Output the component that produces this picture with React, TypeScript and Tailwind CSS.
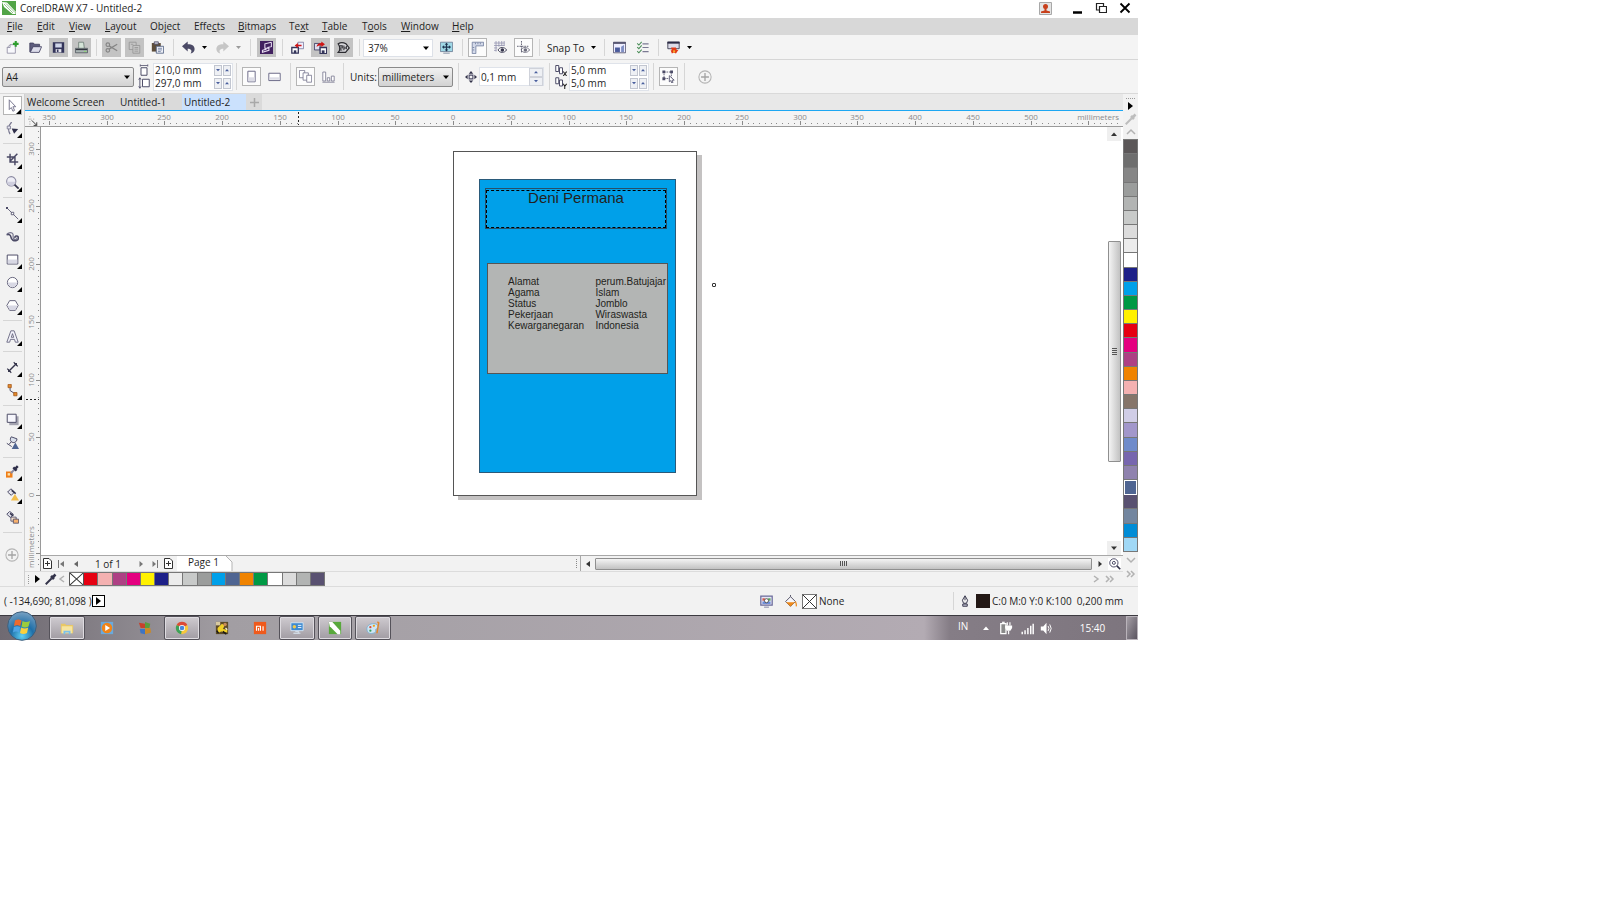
import type { ReactNode } from 'react';

/* ---------- drawing helpers ---------- */

function Icon({ size = 16, children }: { size?: number; children: ReactNode }) {
  return (
    <svg width={size} height={size} viewBox="0 0 16 16" fill="none" aria-hidden="true" className="shrink-0">
      {children}
    </svg>
  );
}

function Tri({ dir, className = 'text-black' }: { dir: 'up' | 'down' | 'left' | 'right'; className?: string }) {
  const d = {
    up: 'M0 5 L3 1.5 L6 5Z',
    down: 'M0 1.5 L3 5 L6 1.5Z',
    left: 'M5 0 L1 3 L5 6Z',
    right: 'M1.5 0 L5 3 L1.5 6Z',
  }[dir];
  return (
    <svg width="6" height="6" viewBox="0 0 6 6" fill="currentColor" aria-hidden="true" className={`shrink-0 ${className}`}>
      <path d={d} />
    </svg>
  );
}

const ink = '#4b4a66';

/* ---------- icon drawings ---------- */

const newDoc = (
  <Icon>
    <path d="M5 4.500h6.500v10.500H1.500V8z" fill="#f8f8fc" stroke="#8c8aa0" />
    <path d="M1.500 8H5V4.500" stroke="#8c8aa0" />
    <path d="M12 0v7M8.500 3.500h7" stroke="#2f9e2f" strokeWidth="2.600" />
  </Icon>
);
const openDoc = (
  <Icon>
    <path d="M1 13.500V2.500h4.500l1 1.500h6.500v3" fill="#5c5b7c" stroke="#3f3e5c" />
    <path d="M1.500 14L5 7h10.500l-3 7z" fill="#dcdcea" stroke="#3f3e5c" />
  </Icon>
);
const save = (
  <Icon>
    <path d="M1 1.500h14v13H1z" fill="#33345a" />
    <path d="M4 3h8v5H4z" fill="#cfd5e8" />
    <path d="M4.500 10h7v4h-7z" fill="#e6e6ee" />
    <path d="M6 10.500h2v3H6z" fill="#33345a" />
  </Icon>
);
const print = (
  <Icon>
    <path d="M4.500 9V1.500h6L11.500 9" fill="#d5e4d8" stroke="#6d7c75" />
    <path d="M.5 9h15v5.500H.5z" fill="#a9b4b4" stroke="#50565e" />
    <path d="M1 10.500h14" stroke="#33363f" strokeWidth="1.500" />
    <path d="M11 12.800h3" stroke="#8ae06a" />
  </Icon>
);
const cut = (
  <Icon>
    <g stroke="#858585" strokeWidth="1.500">
      <path d="M5 6L15 12M5 10L15 4" />
      <circle cx="3.500" cy="4.500" r="2.200" />
      <circle cx="3.500" cy="11.500" r="2.200" />
    </g>
  </Icon>
);
const copy = (
  <Icon>
    <g stroke="#949494" fill="#c6c6c6">
      <path d="M1.500 1.500h8.500v9H1.500z" />
      <path d="M6 5.500h8.500v9.500H6z" />
      <path d="M8 8h4.500M8 10h4.500M8 12.500h4.500M3.500 4h3" />
    </g>
  </Icon>
);
const paste = (
  <Icon>
    <path d="M1 2.500h11V13H1z" fill="#5c4c3a" />
    <path d="M4 1h5v3H4z" fill="#c9c9d4" stroke="#4b4a66" />
    <path d="M6.500 6.500h9v8.500h-9z" fill="#eef0f8" stroke="#4b5b7c" />
    <path d="M8.500 9h5M8.500 11h5M8.500 13h3.500" stroke="#6b7b9c" />
  </Icon>
);
const undo = (
  <Icon>
    <path d="M0 6.500L7 .5V4c6 0 8.500 2.500 8.500 6 0 2.500-2 4.500-5 5.500 2-3 1.500-6-3.500-6V13z" fill="#4b4a66" />
  </Icon>
);
const redo = (
  <Icon>
    <path d="M16 6.500L9 .5V4C3 4 .5 6.500.5 10c0 2.500 2 4.500 5 5.500-2-3-1.500-6 3.500-6V13z" fill="#c6c6c6" />
  </Icon>
);
const launcher = (
  <Icon>
    <path d="M0 0h16v16H0z" fill="#41205f" />
    <path d="M14 1.500L6 3.500V9h5v2.500L3 14v-2.500L8 10M14 1.500V7L9 8" stroke="#e8def2" strokeWidth="1.300" />
  </Icon>
);
const importIcon = (
  <Icon>
    <path d="M8.500 1.500h7v8h-7z" fill="#eef" stroke="#77779a" />
    <path d="M1 8h8v7H1z" fill="#fff" stroke="#33345a" strokeWidth="1.600" />
    <path d="M3.500 11.500h3V15h-3z" fill="#33345a" />
    <path d="M13 4.500H8.500v-2L4.500 5.500l4 3V6.500H13z" fill="#cf1616" />
  </Icon>
);
const exportIcon = (
  <Icon>
    <path d="M.5 3h7v8h-7z" fill="#dde" stroke="#33345a" />
    <path d="M7.500 8h8v7.500h-8z" fill="#fff" stroke="#33345a" strokeWidth="1.600" />
    <path d="M9.500 11.500h3.500V15H9.500z" fill="#33345a" />
    <path d="M3 7c1-3.500 3-4.500 6-4.500V.5L13.500 4 9 7.500v-2C6 5.500 5 6 3 7z" fill="#cf1616" />
  </Icon>
);
const publish = (
  <Icon>
    <path d="M1.500 3.500c3-2 6-2 9.500 0L15 8.500l-4.500 5.500h-9c2.500-2.500 2.500-7 0-10.500z" fill="#d8d8dc" stroke="#2b2b30" strokeWidth="1.500" />
    <path d="M3.500 6h3v2.500h-3V11h3M8.500 5.500v6M8.500 8.500h3M11.500 6v4" stroke="#2b2b30" strokeWidth="1.300" />
  </Icon>
);
const fullScreen = (
  <Icon>
    <path d="M.5 1.500h15v11.500H.5z" fill="#9fd8e6" stroke="#6a7a92" />
    <path d="M4 15h8" stroke="#9aa4b4" strokeWidth="1.500" />
    <path d="M8 3v8.500M3.500 7.500h9" stroke="#1f3550" strokeWidth="1.500" />
    <path d="M8 2L5.800 4.500h4.400zM8 13l-2.200-2.500h4.400zM2.500 7.500L5 5.300v4.400zM13.500 7.500L11 5.300v4.400z" fill="#1f3550" />
  </Icon>
);
const rulers = (
  <Icon>
    <path d="M1.500 1.500h14v4.500h-9.500v9.500h-4.500z" fill="#d4daea" stroke="#6f7c9c" />
    <path d="M5.500 2v2M8.500 2v2M11.500 2v2M2 8h2M2 11h2" stroke="#6f7c9c" />
  </Icon>
);
const eye = (
  <g>
    <path d="M5 11c2-4 8-4 10.500 0-2.500 4-8.500 4-10.500 0z" fill="#fff" stroke="#44445a" strokeWidth="1.200" />
    <circle cx="10.300" cy="11" r="2.200" fill="#33334a" />
  </g>
);
const grid = (
  <Icon>
    <path d="M0 2.500h13M0 5.500h13M0 8.500h4M0 11.500h3M2.500 0v13M6 0v7M9.500 0v6M12.500 0v6" stroke="#9494b0" />
    {eye}
  </Icon>
);
const guides = (
  <Icon>
    <path d="M0 6.500h15M5.500 0v14" stroke="#44445a" strokeDasharray="2 1" />
    <g opacity="0.700">{eye}</g>
  </Icon>
);
const optionsIcon = (
  <Icon>
    <path d="M.5 1.500h15v13H.5z" fill="#eef" stroke="#4b4a66" />
    <path d="M.5 2.500h15" stroke="#4b4a66" strokeWidth="2" />
    <path d="M2.500 8h6v5.500h-6z" fill="#4b5b9c" />
    <path d="M10 13.500V7l3.500-2v8.500z" fill="#7f8fc4" />
  </Icon>
);
const checklist = (
  <Icon>
    <path d="M8 3.500h7.500M8 8h7.500M8 13h7.500" stroke="#7b7a93" strokeWidth="1.500" />
    <path d="M1.500 3l2 2L7 1M1.500 7.500l2 2L7 5.500M1.500 12.500l2 2L7 10.500" stroke="#4d8f5a" strokeWidth="1.300" />
  </Icon>
);
const appLauncher = (
  <Icon>
    <path d="M1 1.500h14v8H1z" fill="#dcdce8" stroke="#2b2b44" />
    <path d="M.5 2h15" stroke="#2b2b44" strokeWidth="2.500" />
    <path d="M5 8h6l1 3h2L11 15.500 8.500 14 6 15.500 4.500 11.500H6z" fill="#e23a17" />
    <path d="M7.500 11.500H10V14H7.500z" fill="#f6b02c" />
  </Icon>
);
const nudge = (
  <Icon size={12}>
    <path d="M5.500 5.500h5v5h-5z" stroke={ink} strokeWidth="1.500" />
    <path d="M8 0l3 3.500H5zM8 16l3-3.500H5zM0 8l3.500-3v6zM16 8l-3.500-3v6z" fill="#33334a" />
  </Icon>
);
const allPages = (
  <Icon>
    <g fill="#fff" stroke="#77768f">
      <path d="M.5.500h6.500v9H.5z" />
      <path d="M5 3.500h6.500v9H5z" />
      <path d="M9.500 6.500h6v8.500h-6z" />
    </g>
  </Icon>
);
const currentPage = (
  <Icon>
    <g fill="#fff" stroke="#77768f">
      <path d="M1 2.500h3.500v11H1z" />
      <path d="M6.500 9.500h3v4h-3z" />
      <path d="M11.500 7.500H15v6h-3.500z" />
      <path d="M.5 15h15" />
    </g>
  </Icon>
);
const treatAsFilled = (
  <Icon>
    <path d="M2.500 2.500h9v8h-9z" stroke={ink} strokeDasharray="2 1" />
    <path d="M.5.500h3.500V4H.5zM10 .500h3.500V4H10zM.5 9h3.500v3.500H.5z" fill={ink} />
    <path d="M9 7l6 5.500h-2.500l1 3-1.500.5-1-3L9 14.500z" fill="#fff" stroke={ink} />
  </Icon>
);
const plusCircle = (
  <Icon size={14}>
    <circle cx="8" cy="8" r="7" stroke="#b4b4b4" strokeWidth="1.200" />
    <path d="M8 3.500v9M3.500 8h9" stroke="#a4a4a4" strokeWidth="1.500" />
  </Icon>
);

/* ---------- small controls ---------- */

function Slot({ label, framed, dim, children }: { label: string; framed?: boolean; dim?: boolean; children: ReactNode }) {
  const look = dim ? 'bg-[#c3c3c3]' : framed ? 'border border-[#b5b5b5] bg-[#fcfcfc]' : '';
  return (
    <span className="flex w-[23px] shrink-0 justify-center">
      <button type="button" aria-label={label} className={`flex size-[19px] items-center justify-center ${look}`}>
        <span className="flex size-[13px] items-center justify-center [&>svg]:max-h-full [&>svg]:max-w-full">{children}</span>
      </button>
    </span>
  );
}

function Sep({ className = 'w-2' }: { className?: string }) {
  return (
    <span className={`flex h-full shrink-0 items-center justify-center ${className}`}>
      <span className="h-[calc(100%-6px)] w-px bg-[#d6d6d6]" />
    </span>
  );
}

function Caret({ label, className = 'text-black' }: { label: string; className?: string }) {
  return (
    <button type="button" aria-label={label} className="mr-0.5 flex w-[9px] shrink-0 items-center justify-center">
      <svg width="5" height="3" viewBox="0 0 5 3" fill="currentColor" className={className}>
        <path d="M0 0h5L2.500 3z" />
      </svg>
    </button>
  );
}

function SpinField({ id, label, value }: { id: string; label: string; value: string }) {
  return (
    <span className="flex h-[13px] w-full items-center bg-white pr-px">
      <input id={id} aria-label={label} defaultValue={value} className="h-4 w-0 flex-1 bg-transparent pl-px leading-4 outline-none" />
      <span className="flex gap-px">
        <button type="button" aria-label={`Decrease ${label}`} className="flex h-[11px] w-2 items-center justify-center border border-[#c2c6d0] bg-[#eef0f4]">
          <Tri dir="down" className="w-1 text-[#4a5f9e]" />
        </button>
        <button type="button" aria-label={`Increase ${label}`} className="flex h-[11px] w-2 items-center justify-center border border-[#c2c6d0] bg-[#eef0f4]">
          <Tri dir="up" className="w-1 text-[#4a5f9e]" />
        </button>
      </span>
    </span>
  );
}

function DropDown({ id, label, value, className }: { id: string; label: string; value: string; className: string }) {
  return (
    <span className={`relative flex h-5 shrink-0 items-center ${className}`}>
      <select
        id={id}
        aria-label={label}
        className="h-full w-full appearance-none rounded-[2px] border border-[#8a8a8a] bg-linear-to-b from-[#f1f1f1] to-[#d2d2d2] pl-[3px] outline-none"
      >
        <option>{value}</option>
      </select>
      <span className="pointer-events-none absolute right-1">
        <Tri dir="down" />
      </span>
    </span>
  );
}

/* ---------- bars ---------- */

function TitleBar() {
  return (
    <header className="flex h-[18px] items-center justify-between bg-white pr-[7px] pb-0.5 pl-0.5">
      <div className="flex items-center gap-1">
        <svg width="14" height="14" viewBox="0 0 14 14" aria-hidden="true">
          <path d="M0 0h14v14H0z" fill="#52a447" />
          <path d="M0 1l5 .5L13.500 10.500V13H10.500L2 6z" fill="#fff" />
          <path d="M2 3l9 9M4 2.500l9 9" stroke="#52a447" strokeWidth="0.600" />
        </svg>
        <h1 className="text-[10px] leading-4">CorelDRAW X7 - Untitled-2</h1>
      </div>
      <div className="flex items-center">
        <button type="button" aria-label="Account" className="mr-5">
          <svg width="13" height="13" viewBox="0 0 13 13">
            <path d="M.5.5h12v12H.5z" fill="#e4e4e4" stroke="#a8a8a8" />
            <circle cx="6.500" cy="4.500" r="2.500" fill="#c8401c" />
            <path d="M5.500 6h2v2.500l3.500 1V11H2V9.500l3.500-1z" fill="#c8401c" />
          </svg>
        </button>
        <button type="button" aria-label="Minimize" className="mr-3">
          <svg width="11" height="12" viewBox="0 0 11 12"><path d="M1 10.500h9" stroke="#000" strokeWidth="2.500" /></svg>
        </button>
        <button type="button" aria-label="Restore" className="mr-3">
          <svg width="12" height="12" viewBox="0 0 12 12" fill="none" stroke="#222">
            <path d="M4.500 8H1.500V1.500h7v3" strokeWidth="1.200" />
            <path d="M4.500 4.500h7v6h-7z" fill="#fff" strokeWidth="1.200" />
          </svg>
        </button>
        <button type="button" aria-label="Close">
          <svg width="12" height="12" viewBox="0 0 12 12" stroke="#000" strokeWidth="1.800"><path d="M1.500 1.500l9 9M10.500 1.500l-9 9" /></svg>
        </button>
      </div>
    </header>
  );
}

const menus: [string, string, string, string][] = [
  ['', 'F', 'ile', 'w-[30px]'],
  ['', 'E', 'dit', 'w-8'],
  ['', 'V', 'iew', 'w-9'],
  ['', 'L', 'ayout', 'w-[45px]'],
  ['Ob', 'j', 'ect', 'w-11'],
  ['Effe', 'c', 'ts', 'w-11'],
  ['', 'B', 'itmaps', 'w-[51px]'],
  ['Te', 'x', 't', 'w-[33px]'],
  ['', 'T', 'able', 'w-10'],
  ['T', 'o', 'ols', 'w-[39px]'],
  ['', 'W', 'indow', 'w-[51px]'],
  ['', 'H', 'elp', 'w-[35px]'],
];

function MenuBar() {
  return (
    <nav aria-label="Menu" className="flex h-[17px] items-start bg-[#d8d8d8] pt-px pl-[7px]">
      {menus.map(([before, key, after, width]) => (
        <button key={before + key + after} type="button" className={`shrink-0 text-left whitespace-nowrap ${width}`}>
          {before}
          <span className="underline">{key}</span>
          {after}
        </button>
      ))}
    </nav>
  );
}

function StandardBar() {
  return (
    <div role="toolbar" aria-label="Standard" className="flex h-[25px] items-center border-b border-[#d6d6d6] pt-px pl-px">
      <Slot label="New">{newDoc}</Slot>
      <Slot label="Open">{openDoc}</Slot>
      <Slot label="Save" dim>{save}</Slot>
      <Slot label="Print" dim>{print}</Slot>
      <Sep className="w-[7px]" />
      <Slot label="Cut" dim>{cut}</Slot>
      <Slot label="Copy" dim>{copy}</Slot>
      <Slot label="Paste">{paste}</Slot>
      <Sep />
      <Slot label="Undo">{undo}</Slot>
      <Caret label="Undo list" />
      <Slot label="Redo">{redo}</Slot>
      <Caret label="Redo list" className="text-[#9a9a9a]" />
      <Sep className="w-2.5" />
      <Slot label="Search content" dim>{launcher}</Slot>
      <Sep />
      <Slot label="Import">{importIcon}</Slot>
      <Slot label="Export" dim>{exportIcon}</Slot>
      <Slot label="Publish to PDF" dim>{publish}</Slot>
      <Sep />
      <span className="relative flex h-[18px] w-[70px] shrink-0 items-center">
        <select aria-label="Zoom level" className="h-full w-full appearance-none border border-[#dde1e8] bg-white pl-1 outline-none">
          <option>37%</option>
        </select>
        <span className="pointer-events-none absolute right-1"><Tri dir="down" /></span>
      </span>
      <span className="w-0.5 shrink-0" />
      <Slot label="Full-screen preview">{fullScreen}</Slot>
      <Sep />
      <Slot label="Show rulers" framed>{rulers}</Slot>
      <Slot label="Show grid">{grid}</Slot>
      <Slot label="Show guidelines" framed>{guides}</Slot>
      <Sep />
      <button type="button" className="w-[46px] shrink-0 pl-1 text-left whitespace-nowrap">Snap To</button>
      <Caret label="Snap options" />
      <Sep />
      <Slot label="Welcome options">{optionsIcon}</Slot>
      <Slot label="Options">{checklist}</Slot>
      <Sep />
      <Slot label="Application launcher">{appLauncher}</Slot>
      <Caret label="Applications" />
    </div>
  );
}

function PropertyBar() {
  return (
    <div role="toolbar" aria-label="Property bar" className="flex h-[34px] items-center border-b border-[#d9d9d9] pl-0.5">
      <DropDown id="paper" label="Page size" value="A4" className="w-[132px]" />
      <span className="flex w-[19px] shrink-0 flex-col items-center gap-px">
        <Icon size={12}>
          <path d="M4 5h8v10H4z" fill="#fff" stroke={ink} strokeWidth="1.300" />
          <path d="M3 2h10M3 .5v3M13 .5v3" stroke={ink} />
        </Icon>
        <Icon size={12}>
          <path d="M6 3h9v10H6z" fill="#fff" stroke={ink} strokeWidth="1.300" />
          <path d="M2.500 2v12M1 3.500L2.500 1 4 3.500M1 12.500L2.500 15 4 12.500" stroke={ink} strokeWidth="1.200" />
        </Icon>
      </span>
      <span className="flex w-20 shrink-0 flex-col border border-[#dfe3ea]">
        <SpinField id="page-width" label="Page width" value="210,0 mm" />
        <SpinField id="page-height" label="Page height" value="297,0 mm" />
      </span>
      <Sep className="w-[7px]" />
      <Slot label="Portrait" framed>
        <Icon><path d="M3.500 1.500h9v13h-9z" fill="#fff" stroke="#6b6a88" strokeWidth="1.200" /><path d="M4 9h8v5H4z" fill="#dcdce6" /></Icon>
      </Slot>
      <Slot label="Landscape">
        <Icon><path d="M1 4h14v9H1z" fill="#fff" stroke="#6b6a88" strokeWidth="1.200" /><path d="M2 9h12v3H2z" fill="#dcdce6" /></Icon>
      </Slot>
      <Sep />
      <Slot label="All pages" framed>{allPages}</Slot>
      <Slot label="Current page">{currentPage}</Slot>
      <Sep className="w-[7px]" />
      <label htmlFor="units" className="w-[31px] shrink-0 pl-[3px] whitespace-nowrap">Units:</label>
      <DropDown id="units" label="Units" value="millimeters" className="w-[75px]" />
      <Sep className="w-2.5" />
      <span className="flex w-4 shrink-0 justify-center">{nudge}</span>
      <span className="flex h-[19px] w-[65px] shrink-0 items-center border border-[#dfe3ea] bg-white">
        <input id="nudge" aria-label="Nudge distance" defaultValue="0,1 mm" className="h-4 w-0 flex-1 bg-transparent pl-px leading-4 outline-none" />
        <span className="flex flex-col">
          <button type="button" aria-label="Increase nudge" className="flex h-[9px] w-3.5 items-center justify-center border border-[#cfd2da] bg-[#eef0f4]"><Tri dir="up" className="w-1 text-[#4a5f9e]" /></button>
          <button type="button" aria-label="Decrease nudge" className="flex h-[9px] w-3.5 items-center justify-center border border-[#cfd2da] bg-[#eef0f4]"><Tri dir="down" className="w-1 text-[#4a5f9e]" /></button>
        </span>
      </span>
      <Sep className="w-2.5" />
      <span className="flex w-[14px] shrink-0 flex-col items-center gap-px">
        <Icon size={12}>
          <path d="M1 2h4v8H1zM6 5h4v8H6z" fill="#fff" stroke={ink} strokeWidth="1.300" />
          <path d="M11 10l4.500 6M15.500 10L11 16" stroke="#222" strokeWidth="1.400" />
        </Icon>
        <Icon size={12}>
          <path d="M1 1h4v8H1zM6 4h4v8H6z" fill="#fff" stroke={ink} strokeWidth="1.300" />
          <path d="M11 9l2 3.500L15.500 9M13 12v4" stroke="#222" strokeWidth="1.400" />
        </Icon>
      </span>
      <span className="ml-px flex w-20 shrink-0 flex-col border border-[#dfe3ea]">
        <SpinField id="dup-x" label="Duplicate x" value="5,0 mm" />
        <SpinField id="dup-y" label="Duplicate y" value="5,0 mm" />
      </span>
      <Sep />
      <Slot label="Treat as filled" framed>{treatAsFilled}</Slot>
      <Sep />
      <button type="button" aria-label="Customize" className="ml-2.5">{plusCircle}</button>
    </div>
  );
}

/* ---------- toolbox ---------- */

type Tool = { label: string; fly?: boolean; framed?: boolean; art: ReactNode };

const toolGroups: { roomy: boolean; tools: Tool[] }[] = [
  {
    roomy: true,
    tools: [
      { label: 'Pick', fly: true, framed: true, art: <path d="M4 1l8 8.500H8.500l2 4.500-2 1-2-4.500L4 13z" fill="#fff" stroke="#77768f" strokeWidth="1.200" /> },
      { label: 'Shape', fly: true, art: <g><path d="M7 0C3 4 2 10 5 15" stroke="#77768f" strokeWidth="1.500" /><path d="M1.500 5h4v3.500h-4z" fill="#e4e4ee" stroke="#77768f" /><path d="M7 8l8 .5-5 6z" fill="#2f2f4a" /></g> },
    ],
  },
  {
    roomy: true,
    tools: [
      { label: 'Crop', fly: true, art: <path d="M5 1v10h10M1 5h10v10M14 1L5 10" stroke={ink} strokeWidth="1.800" /> },
      { label: 'Zoom', fly: true, art: <g><circle cx="6.500" cy="6.500" r="5.700" fill="#eeeef6" stroke="#8988a0" strokeWidth="1.300" /><path d="M1.500 7a5 5 0 0010 0z" fill="#cfcfdf" /><path d="M10.500 10.500L15.500 15.500" stroke="#33334a" strokeWidth="2.200" /></g> },
    ],
  },
  {
    roomy: true,
    tools: [
      { label: 'Freehand', fly: true, art: <g><path d="M1 1l14 14" stroke={ink} /><path d="M6.500 6.500h3v3h-3z" fill="#fff" stroke={ink} /><path d="M0 0h2.500v2.500H0z" fill={ink} /></g> },
      { label: 'Artistic media', art: <g><path d="M1 6.500c0-3 6-4.500 7.500-1.500 1 2-1 5 1.500 6.500 2 1 4-.5 3.500-2.500" stroke="#77768f" strokeWidth="1.500" /><path d="M1.500 6c2.500-1 4 0 4.500 2.500.5 4 4 5.500 7 4.500s3-5 .5-5.500-3 1.500-2 2.500" stroke={ink} strokeWidth="1.900" /></g> },
      { label: 'Rectangle', fly: true, art: <g><path d="M1.500 2.500h13v11h-13z" fill="#fff" stroke={ink} strokeWidth="1.200" /><path d="M2 8h12v5H2z" fill="#d8d8e4" /></g> },
      { label: 'Ellipse', fly: true, art: <g><circle cx="8" cy="8" r="6.300" fill="#fff" stroke={ink} /><path d="M2.200 8a5.800 5.800 0 0011.600 0z" fill="#d8d8e4" /></g> },
      { label: 'Polygon', fly: true, art: <g><path d="M4.500 2h7L15 8l-3.500 6h-7L1 8z" fill="#fff" stroke={ink} /><path d="M1.700 8h12.600l-3 5.500H4.700z" fill="#d8d8e4" /></g> },
    ],
  },
  {
    roomy: true,
    tools: [
      { label: 'Text', fly: true, art: <path d="M6 1h4l5 14h-3.500l-1-3.500h-5l-1 3.500H1zM8 4.500L6.500 9h3z" fill="#f2f2fa" stroke="#66657f" strokeWidth="1.100" /> },
    ],
  },
  {
    roomy: false,
    tools: [
      { label: 'Dimension', fly: true, art: <g><path d="M4 12l8-8" stroke="#33334a" strokeWidth="1.800" /><path d="M1.500 9.500l5 5M9.500 1.500l5 5" stroke="#33334a" strokeWidth="1.300" /><path d="M2.500 13.500v-4l4 4zM13.500 2.500v4l-4-4z" fill="#33334a" /></g> },
      { label: 'Connector', fly: true, art: <g><path d="M5 4v4l6 4" stroke={ink} strokeWidth="1.200" /><path d="M2.500.5h4v4h-4zM9.500 10.500h4v4h-4z" fill="#e58a2a" stroke="#a35a20" /></g> },
    ],
  },
  {
    roomy: false,
    tools: [
      { label: 'Drop shadow', fly: true, art: <g><path d="M4 4h11.500v11H4z" fill="#a4a4b0" /><path d="M1.500 1.500h11v10h-11z" fill="#f6f6fc" stroke={ink} strokeWidth="1.200" /></g> },
      { label: 'Transparency', art: <g><path d="M6.500 1l7 2.500c0 4-4 6-7 3.500C5 5.500 5 3 6.500 1z" fill="#d9e0ec" stroke={ink} strokeWidth="1.200" /><path d="M6.500 7L4 10M1 9l6 4" stroke={ink} strokeWidth="1.200" /><path d="M11.500 8l4.500 8H7z" fill="#4f6592" /></g> },
    ],
  },
  {
    roomy: false,
    tools: [
      { label: 'Color eyedropper', fly: true, art: <g><path d="M0 8h8v7.500H0z" fill="#ef7d17" /><path d="M2 10h3v3H2z" fill="#fde0a8" /><path d="M6 10l6-6" stroke="#8a8aa4" strokeWidth="2.500" /><path d="M9 3l4 4M11 5l3.500-3.500" stroke="#2f2f4a" strokeWidth="3" /></g> },
      { label: 'Interactive fill', fly: true, art: <g><path d="M2 5l4-4 4.500 4-4 4z" fill="#e4e4ee" stroke={ink} strokeWidth="1.200" /><path d="M7 3l5 4" stroke="#2f2f4a" strokeWidth="1.800" /><path d="M11 7.500l5 8H6z" fill="#f2bd4b" /></g> },
      { label: 'Smart fill', art: <g><path d="M1 4l3.500-3.500L9 4 5.500 8z" fill="#e4e4ee" stroke={ink} strokeWidth="1.200" /><path d="M5 3l4 3" stroke="#2f2f4a" strokeWidth="1.800" /><path d="M6 7.500h6.500v5H6z" fill="#f6e2cc" stroke={ink} /><path d="M9 10h6.500v5H9z" fill="#f6b06c" stroke={ink} /></g> },
    ],
  },
];

function Toolbox() {
  return (
    <aside aria-label="Toolbox" className="flex w-[25px] shrink-0 flex-col items-center border-r border-[#d0d0d0] bg-[#f2f2f2]">
      {toolGroups.map((group) => (
        <div key={group.tools[0].label} className="flex w-full flex-col items-center">
          {group.tools.map((tool) => (
            <span key={tool.label} className="flex h-[23px] items-center">
              <button
                type="button"
                aria-label={tool.label}
                className={`relative flex size-[19px] items-center justify-center ${tool.framed ? 'border border-[#b5b5b5] bg-white' : ''}`}
              >
                <Icon size={13}>{tool.art}</Icon>
                {tool.fly && (
                  <svg width="5" height="5" viewBox="0 0 5 5" className="absolute right-0 bottom-0" aria-hidden="true">
                    <path d="M5 0v5H0z" />
                  </svg>
                )}
              </button>
            </span>
          ))}
          <span className={`mt-[3px] h-px w-[19px] bg-[#d6d6d6] ${group.roomy ? 'mb-1' : 'mb-0.5'}`} />
        </div>
      ))}
      <button type="button" aria-label="Add tools" className="mt-[13px]">{plusCircle}</button>
    </aside>
  );
}

/* ---------- document tabs and rulers ---------- */

function DocumentTabs() {
  return (
    <div role="tablist" className="flex h-[17px] items-stretch border-b border-[#1ea7f2] bg-[#e8e8e8]">
      <button role="tab" type="button" className="w-[93px] bg-[#dadada] pl-0.5 text-left">Welcome Screen</button>
      <button role="tab" type="button" className="w-16 bg-[#dadada] pl-0.5 text-left">Untitled-1</button>
      <button role="tab" type="button" aria-selected="true" className="w-16 bg-[#cbe1fd] pl-0.5 text-left">Untitled-2</button>
      <button type="button" aria-label="New document" className="flex w-4 items-center justify-center bg-[#dadada]">
        <svg width="9" height="9" viewBox="0 0 9 9" stroke="#a8a8a8" strokeWidth="1.500"><path d="M4.500 0v9M0 4.500h9" /></svg>
      </button>
    </div>
  );
}

const UNIT = 57.75;

function HorizontalRuler() {
  const zero = 412;
  return (
    <svg className="block h-[15px] min-w-0 flex-1" aria-hidden="true">
      {Array.from({ length: 188 }, (_, i) => i - 71).map((i) => (
        <rect key={i} x={Math.round(zero + (i * UNIT) / 10)} y="12" width="1" height="1" fill="#8a8a8a" />
      ))}
      {Array.from({ length: 19 }, (_, i) => i - 7).map((i) => (
        <g key={i}>
          <rect x={Math.round(zero + i * UNIT)} y="10" width="1" height="4" fill="#8a8a8a" />
          {i < 11 && (
            <text x={Math.round(zero + i * UNIT)} y="9" textAnchor="middle" fontSize="8" fill="#8a8a8a">
              {Math.abs(i * 50)}
            </text>
          )}
        </g>
      ))}
      <path d="M257.500 1v13" stroke="#222" strokeDasharray="2 2" />
    </svg>
  );
}

function VerticalRuler() {
  const zero = 368;
  return (
    <svg className="block w-4 shrink-0 self-stretch border-r border-[#9a9a9a]" aria-hidden="true">
      {Array.from({ length: 76 }, (_, i) => i - 12).map((i) => (
        <rect key={i} x="13" y={Math.round(zero - (i * UNIT) / 10)} width="1" height="1" fill="#8a8a8a" />
      ))}
      {Array.from({ length: 8 }, (_, i) => i - 1).map((i) => {
        const y = Math.round(zero - i * UNIT);
        return (
          <g key={i}>
            <rect x="11" y={y} width="4" height="1" fill="#8a8a8a" />
            {i >= 0 && (
              <text transform={`translate(9 ${y}) rotate(-90)`} textAnchor="middle" fontSize="8" fill="#8a8a8a">
                {i * 50}
              </text>
            )}
          </g>
        );
      })}
      <text transform="translate(9 441) rotate(-90)" fontSize="8" fill="#8a8a8a">millimeters</text>
      <path d="M1 272.500h13" stroke="#222" strokeDasharray="2 2" />
    </svg>
  );
}

/* ---------- canvas ---------- */

const labels = ['Alamat', 'Agama', 'Status', 'Pekerjaan', 'Kewarganegaran'];
const values = ['perum.Batujajar', 'Islam', 'Jomblo', 'Wiraswasta', 'Indonesia'];

function Canvas() {
  return (
    <main className="relative min-w-0 flex-1 overflow-hidden bg-white font-['Liberation_Sans',Arial,sans-serif] text-[#231f20]">
      <section className="absolute top-[24px] left-[412px] h-[345px] w-[244px] border border-[#555] bg-white shadow-[5px_4px_0_#c4c2c2]">
        <div className="absolute top-[27px] left-[25px] h-[294px] w-[197px] border border-[#2a5a7a] bg-[#00a0e9]">
          <h2 className="absolute top-[8px] left-[5px] h-[41px] w-[182px] border border-[#27506a] text-center text-[15px] leading-[17px]">
            <span className="absolute inset-x-0 top-px bottom-0 border border-dashed border-black" />
            Deni Permana
          </h2>
          <div className="absolute top-[83px] left-[7px] flex h-[111px] w-[181px] justify-between border border-[#555] bg-[#b3b5b4] pt-3 pr-px pl-[20px] text-[10px] leading-[11px]">
            <ul>{labels.map((t) => <li key={t}>{t}</li>)}</ul>
            <ul>{values.map((t) => <li key={t}>{t}</li>)}</ul>
          </div>
        </div>
      </section>
      <span className="absolute top-[156px] left-[671px] size-[4px] rounded-[1px] border border-[#333]" />
    </main>
  );
}

function VerticalScroll() {
  return (
    <div className="flex w-4 shrink-0 flex-col items-center bg-white pr-0.5">
      <button type="button" aria-label="Scroll up" className="flex h-3.5 w-full items-center justify-center bg-[#efefef]"><Tri dir="up" className="text-[#333]" /></button>
      <span className="flex-[101]" />
      <span className="flex w-[13px] flex-[220] flex-col items-center justify-center gap-px rounded-[1px] border border-[#8f8f8f] bg-linear-to-r from-[#f4f4f4] to-[#c2c2c2]">
        <i className="h-px w-[5px] bg-[#555]" />
        <i className="h-px w-[5px] bg-[#555]" />
        <i className="h-px w-[5px] bg-[#555]" />
        <i className="h-px w-[5px] bg-[#555]" />
      </span>
      <span className="flex-[80]" />
      <button type="button" aria-label="Scroll down" className="flex h-3.5 w-full items-center justify-center bg-[#efefef]"><Tri dir="down" className="text-[#333]" /></button>
    </div>
  );
}

const pagePlus = (
  <svg width="9" height="11" viewBox="0 0 9 11" fill="none" stroke="#333" aria-hidden="true">
    <path d="M.5.5H6L8.500 3v7.500h-8z" fill="#fff" />
    <path d="M4.500 3v5M2 5.500h5" />
  </svg>
);

function Navigator() {
  return (
    <div className="flex h-4 items-center border-t border-[#a8a8a8] bg-[#f2f2f2]">
      <button type="button" aria-label="Add page before" className="ml-0.5">{pagePlus}</button>
      <button type="button" aria-label="First page" className="ml-1.5 flex items-center"><i className="h-2 w-px bg-[#777]" /><Tri dir="left" className="text-[#777]" /></button>
      <button type="button" aria-label="Previous page" className="ml-2 w-[7px]"><Tri dir="left" className="text-[#666]" /></button>
      <span className="ml-[15px] w-[43px] whitespace-nowrap">1 of 1</span>
      <button type="button" aria-label="Next page" className="w-[7px]"><Tri dir="right" className="text-[#777]" /></button>
      <button type="button" aria-label="Last page" className="ml-[6px] flex items-center"><Tri dir="right" className="text-[#777]" /><i className="h-2 w-px bg-[#777]" /></button>
      <button type="button" aria-label="Add page after" className="ml-1.5">{pagePlus}</button>
      <button type="button" className="ml-1 flex h-full items-start bg-white pl-[11px] leading-3 whitespace-nowrap">
        Page 1
        <svg width="15" height="15" viewBox="0 0 15 15" className="bg-[#f2f2f2]" aria-hidden="true">
          <path d="M0 0h7l6 6v9H0z" fill="#fff" />
          <path d="M7 0l6 6v9" fill="none" stroke="#b4b4b4" />
        </svg>
      </button>
      <span className="flex flex-[344] items-center justify-end self-stretch border-r border-[#a8a8a8] pr-[3px]">
        <i className="h-[9px] border-l border-dotted border-[#888]" />
      </span>
      <div className="flex h-full flex-[541] items-center pr-0.5">
        <button type="button" aria-label="Scroll left" className="flex h-full w-3.5 items-center justify-center"><Tri dir="left" className="text-[#333]" /></button>
        <span className="flex h-3 flex-1 items-center justify-center gap-px rounded-[1px] border border-[#8f8f8f] bg-linear-to-b from-[#f4f4f4] to-[#c2c2c2]">
          <i className="h-[5px] w-px bg-[#555]" />
          <i className="h-[5px] w-px bg-[#555]" />
          <i className="h-[5px] w-px bg-[#555]" />
          <i className="h-[5px] w-px bg-[#555]" />
        </span>
        <button type="button" aria-label="Scroll right" className="flex h-full w-4 items-center justify-center"><Tri dir="right" className="text-[#333]" /></button>
        <button type="button" aria-label="Navigate" className="flex w-[13px] items-center justify-center bg-white">
          <Icon size={12}>
            <circle cx="6.500" cy="6.500" r="5.500" stroke="#4b4a66" strokeWidth="1.300" />
            <circle cx="6.500" cy="6.500" r="2" stroke="#4b4a66" strokeWidth="1.300" />
            <path d="M10.500 10.500L15 15" stroke="#33334a" strokeWidth="2.200" />
          </Icon>
        </button>
      </div>
    </div>
  );
}

/* ---------- palettes ---------- */

const documentColors = [
  ['bg-[#e60012]', 'Red'], ['bg-[#f4b1b1]', 'Pink'], ['bg-[#ae4084]', 'Plum'], ['bg-[#e4007f]', 'Magenta'],
  ['bg-[#fff100]', 'Yellow'], ['bg-[#1d2088]', 'Navy'], ['bg-[#ececec]', '10% Black'], ['bg-[#c8cac9]', '30% Black'],
  ['bg-[#9b9d9c]', '50% Black'], ['bg-[#00a0e9]', 'Cyan'], ['bg-[#4f6592]', 'Slate'], ['bg-[#f08300]', 'Orange'],
  ['bg-[#009944]', 'Green'], ['bg-white', 'White'], ['bg-[#dcdcdc]', '20% Black'], ['bg-[#b2b4b3]', '40% Black'],
  ['bg-[#595171]', 'Dusk'],
];

const paletteColors = [
  'bg-[#5b5758]', 'bg-[#6e6e6e]', 'bg-[#868686]', 'bg-[#9b9d9c]', 'bg-[#b2b4b3]', 'bg-[#c8cac9]', 'bg-[#dcdcdc]', 'bg-[#ececec]',
  'bg-white', 'bg-[#1d2088]', 'bg-[#00a0e9]', 'bg-[#009944]', 'bg-[#fff100]', 'bg-[#e60012]', 'bg-[#e4007f]', 'bg-[#ae4084]',
  'bg-[#f08300]', 'bg-[#f4b1b1]', 'bg-[#86756a]', 'bg-[#d0cde6]', 'bg-[#a297cb]', 'bg-[#6f8bca]', 'bg-[#7766ae]', 'bg-[#8f82ae]',
  'bg-[#4f6592]', 'bg-[#595171]', 'bg-[#73869f]', 'bg-[#008cd6]', 'bg-[#a0d8f6]',
];

const dropper = (color: string) => (
  <Icon size={12}>
    <path d="M1 15l8-8" stroke={color} strokeWidth="2.500" />
    <path d="M8 4l4 4M10 6l4-4" stroke={color} strokeWidth="3.500" />
  </Icon>
);

function Chevron({ d }: { d: string }) {
  return (
    <svg width="10" height="8" viewBox="0 0 10 8" fill="none" stroke="#b2b2b2" strokeWidth="1.500" aria-hidden="true"><path d={d} /></svg>
  );
}

function DocumentPalette() {
  return (
    <div className="flex h-[15px] items-center border-t border-[#dcdcdc] bg-[#f2f2f2] pl-[3px]">
      <span className="mr-[6px] h-[9px] w-px border-l border-dotted border-[#999]" />
      <button type="button" aria-label="Palette menu" className="mr-[5px]">
        <svg width="5" height="8" viewBox="0 0 5 8"><path d="M0 0l5 4-5 4z" /></svg>
      </button>
      <button type="button" aria-label="Pick color">{dropper('#33334a')}</button>
      <button type="button" aria-label="Scroll palette left" className="mr-0.5"><Chevron d="M7 1L3 4l4 3" /></button>
      <div className="flex h-full w-[256px] shrink-0 border-y border-[#777]">
        <button type="button" aria-label="No color" className="flex-1 border-x border-[#555] bg-white">
          <svg width="100%" height="100%" viewBox="0 0 13 13" preserveAspectRatio="none" stroke="#333"><path d="M0 0l13 13M13 0L0 13" /></svg>
        </button>
        {documentColors.map(([bg, name]) => (
          <button key={name} type="button" aria-label={name} className={`flex-1 border-r border-[#777] ${bg}`} />
        ))}
      </div>
      <span className="flex-1" />
      <button type="button" aria-label="Scroll palette right" className="mr-1"><Chevron d="M3 1l4 3-4 3" /></button>
      <button type="button" aria-label="More colors" className="mr-2"><Chevron d="M1 1l3 3-3 3M5 1l3 3-3 3" /></button>
    </div>
  );
}

function ColorPalette() {
  return (
    <aside aria-label="Color palette" className="flex w-[15px] shrink-0 flex-col items-center bg-[#f2f2f2] pt-1">
      <span className="h-px w-[9px] border-t border-dotted border-[#999]" />
      <button type="button" aria-label="Palette options" className="mt-[3px] mb-[3px]">
        <svg width="5" height="8" viewBox="0 0 5 8" className="block"><path d="M0 0l5 4-5 4z" /></svg>
      </button>
      <button type="button" aria-label="Sample color" className="[&>svg]:block">{dropper('#bdbdbd')}</button>
      <button type="button" aria-label="Scroll colors up" className="flex h-[14px] items-center"><Chevron d="M1 6l4-4 4 4" /></button>
      <div className="flex w-full flex-1 flex-col border-x border-t border-[#777]">
        {paletteColors.map((bg, i) => (
          <button
            key={bg}
            type="button"
            aria-label={`Color ${i + 1}`}
            className={`w-full flex-1 ${i === 24 ? 'border border-white' : 'border-b border-[#777]'} ${bg}`}
          />
        ))}
      </div>
      <button type="button" aria-label="Scroll colors down" className="mt-1"><Chevron d="M1 2l4 4 4-4" /></button>
      <button type="button" aria-label="Expand palette" className="mt-1.5 mb-2"><Chevron d="M1 1l3 3-3 3M5 1l3 3-3 3" /></button>
    </aside>
  );
}

/* ---------- status bar ---------- */

function StatusBar() {
  return (
    <footer className="flex h-[29px] items-center border-t border-[#dcdcdc] bg-[#f2f2f2] pl-1">
      <span className="w-[88px] whitespace-nowrap">( -134,690; 81,098 )</span>
      <button type="button" aria-label="Status options" className="flex h-3 w-[13px] items-center justify-center border border-black bg-white">
        <svg width="5" height="8" viewBox="0 0 5 8"><path d="M0 0l5 4-5 4z" /></svg>
      </button>
      <span className="flex-1" />
      <Icon size={13}>
        <path d="M1 1.500h14v11H1z" fill="#e6e6f4" stroke="#6a6a9a" strokeWidth="1.500" />
        <path d="M3 4h3v3H3z" fill="#d85a4a" />
        <path d="M10 4h3v3h-3z" fill="#5aa85a" />
        <path d="M3 8h10v3H3z" fill="#6a8ad8" />
        <circle cx="8" cy="7" r="2.500" fill="#fff" stroke="#444" />
        <path d="M5 15h6" stroke="#9a9ab4" strokeWidth="1.500" />
      </Icon>
      <span className="ml-[11px] flex">
        <Icon size={13}>
          <path d="M2 8l6-6 6 6-6 6z" fill="#f6f6fa" stroke="#555468" strokeWidth="1.200" />
          <path d="M2.500 9h11L8 14z" fill="#ef8a1a" />
          <path d="M8 2V0" stroke="#555468" strokeWidth="1.200" />
          <path d="M14 8c1 2 1.500 4 1 6" stroke="#ef8a1a" strokeWidth="1.500" />
        </Icon>
      </span>
      <svg width="15" height="15" viewBox="0 0 15 15" fill="#fff" stroke="#333" className="mr-0.5 ml-[5px]" aria-hidden="true">
        <path d="M.5.5h14v14H.5z" stroke="#777" />
        <path d="M.5.5l14 14M14.500.5l-14 14" />
      </svg>
      <span className="w-[134px]">None</span>
      <span className="h-[18px] w-px bg-[#d6d6d6]" />
      <span className="ml-[5px] flex">
        <Icon size={12}>
          <path d="M8 1l3.500 6-1.500 4H6L4.500 7z" fill="#eee" stroke="#3c3c50" strokeWidth="1.300" />
          <path d="M8 2v5M5 12h6v3H5z" fill="#c0c0d0" stroke="#3c3c50" strokeWidth="1.300" />
        </Icon>
      </span>
      <span className="mr-0.5 ml-[5px] size-[14px] bg-[#231815]" />
      <span className="w-[146px] whitespace-pre">C:0 M:0 Y:0 K:100  0,200 mm</span>
    </footer>
  );
}

/* ---------- desktop task bar ---------- */

type Task = { label: string; open: boolean; width: string; art: ReactNode };

const tasks: Task[] = [
  { label: 'Explorer', open: true, width: 'w-9', art: <g><path d="M1 3h5l1 1.500h8V14H1z" fill="#e8c766" /><path d="M2 6h12v8H2z" fill="#f6e4a0" /><path d="M4 15v-4h8v4h-2v-2H6v2z" fill="#7cc1ea" /></g> },
  { label: 'Media Player', open: false, width: 'w-[38px]', art: <g><path d="M1 1h14v14H1z" fill="#6aa9dc" /><circle cx="8" cy="8" r="6" fill="#f08418" /><path d="M6 4.500L11.500 8 6 11.500z" fill="#fff" /></g> },
  { label: 'Game', open: false, width: 'w-[38px]', art: <g><path d="M1 2l7 1v5H3z" fill="#c8402a" /><path d="M8 1l6 2-1 5H8z" fill="#5a9c3c" /><path d="M2 9h6v6l-5-1z" fill="#3d74c4" /><path d="M8 8h6l1 5-7 2z" fill="#c98a2a" /></g> },
  { label: 'Chrome', open: true, width: 'w-9', art: <g><circle cx="8" cy="8" r="7" fill="#f6c83c" /><path d="M8 8L1.900 4.500A7 7 0 0114.100 4.500z" fill="#dc4a38" /><path d="M8 8L1.900 4.500A7 7 0 007 15z" fill="#3ca05a" /><circle cx="8" cy="8" r="3.500" fill="#fff" /><circle cx="8" cy="8" r="2.700" fill="#4a88dc" /></g> },
  { label: 'Football', open: false, width: 'w-[38px]', art: <g><path d="M1 1h14v14H1z" fill="#5c4a28" /><path d="M1 1h5v4H1z" fill="#d8c9a0" /><path d="M3 8l5-5 3 2-2 4 5 1v3l-7-1-4 2z" fill="#f0cf28" /><circle cx="11.500" cy="4" r="2" fill="#c88a5a" /><path d="M2 11l2 3M9 12l4 3" stroke="#1c1a14" strokeWidth="1.800" /><path d="M12 8l2 2" stroke="#f4f0dc" strokeWidth="1.500" /></g> },
  { label: 'Mi', open: false, width: 'w-[38px]', art: <g><path d="M1 1h14v14H1z" fill="#ef5a1c" /><path d="M4 11V6h4.500v5M6.300 8v3M11.500 6v5" stroke="#fff" strokeWidth="1.300" /></g> },
  { label: 'Display', open: true, width: 'w-9', art: <g><path d="M1 2h14v9H1z" fill="#3f8ad0" stroke="#d8e8f6" /><circle cx="5" cy="6.500" r="2" fill="#f0c84c" /><path d="M9 5h4M9 7.500h4" stroke="#fff" /><path d="M6 12h4v2H4h8" stroke="#d6e0ea" fill="#d6e0ea" /></g> },
  { label: 'CorelDRAW', open: true, width: 'w-[34px]', art: <g><path d="M1 1h14v14H1z" fill="#58a83c" /><path d="M1 1h4l9 10v4h-3L2 6z" fill="#fff" /></g> },
  { label: 'Paint', open: true, width: 'w-9', art: <g><path d="M1 9c0-4 4-6 8-6 3 0 5 2 5 4s-3 1.500-3 3 1 3-3 4-7-1-7-5z" fill="#cfe6f4" stroke="#7cb0d0" /><circle cx="5" cy="7" r="1.300" fill="#dc4a38" /><circle cx="9" cy="5.500" r="1.300" fill="#f0a418" /><circle cx="5" cy="11" r="1.300" fill="#3ca05a" /><path d="M13 1l1.500 1-2 12" stroke="#e0862a" strokeWidth="1.700" /></g> },
];

function StartOrb() {
  return (
    <button type="button" aria-label="Start" className="relative z-10 -mt-1 mr-3 ml-[7px] shrink-0">
      <svg width="30" height="30" viewBox="0 0 30 30" className="block">
        <defs>
          <radialGradient id="orb" cx="0.500" cy="0.850" r="0.800">
            <stop offset="0" stopColor="#5fd0f4" />
            <stop offset="0.500" stopColor="#1f6fa8" />
            <stop offset="1" stopColor="#6f9cc0" />
          </radialGradient>
        </defs>
        <circle cx="15" cy="15" r="14.300" fill="url(#orb)" stroke="#3f5f7c" />
        <path d="M8 9.500q3.500-2 6.500 0l-1.200 5.500q-3-1.500-6.300 0z" fill="#ef6a2c" />
        <path d="M15.500 10q3.500 2 7.500 0l-1.500 5.500q-3.500 1.800-7 0z" fill="#9ccc3c" />
        <path d="M6.800 16q3.200-1.500 6.300 0L12 21.500q-3-1.800-6 0z" fill="#4fa4e4" />
        <path d="M14.200 16.500q3.500 1.800 7 0L20 22q-3.500 1.800-7 0z" fill="#fbd03c" />
      </svg>
    </button>
  );
}

function Taskbar() {
  return (
    <div className="flex h-[25px] items-center border-t border-[#3c3a40] bg-[#827a83]">
      <div className="flex h-full flex-1 items-center bg-linear-to-r from-[#6f6a72] from-0% via-[#a29ea3] via-25% to-[#b3abb3]">
        <StartOrb />
        {tasks.map((t) => (
          <button
            key={t.label}
            type="button"
            aria-label={t.label}
            className={`flex h-6 shrink-0 items-center justify-center ${t.width} ${
              t.open ? 'mr-[3px] rounded-[2px] border border-[#55525a] bg-linear-to-b from-[#cfcbd0] to-[#a19ca3] shadow-[inset_0_0_0_1px_#dedbe0]' : ''
            }`}
          >
            <Icon size={14}>{t.art}</Icon>
          </button>
        ))}
      </div>
      <div className="flex h-full w-[214px] shrink-0 items-center bg-linear-to-r from-[#b3abb3] via-[#857d86] via-12% to-[#7d757e] text-white">
        <span className="mb-1 ml-[34px] w-[25px] text-[10px]">IN</span>
        <Tri dir="up" className="mr-2.5 text-white" />
        <Icon size={14}>
          <path d="M2 3h6v11.500H2z" fill="#8a8a8a" stroke="#fff" strokeWidth="1.400" />
          <path d="M3.500 1.500h3" stroke="#fff" strokeWidth="1.400" />
          <path d="M7 5h8v3l-2 3h-4L7 8z" fill="#fff" />
          <path d="M9.500 5V1.500M12.500 5V1.500M11 11v4" stroke="#fff" strokeWidth="1.300" />
        </Icon>
        <span className="ml-2 flex">
          <Icon size={13}><path d="M1.500 12v3M5 10v5M8.500 7.500v7.500M12 4.500V15M15 2v13" stroke="#fff" strokeWidth="1.800" /></Icon>
        </span>
        <span className="ml-1.5 flex">
          <Icon size={13}>
            <path d="M1 5.500h3L8 1v14l-4-4.500H1z" fill="#fff" />
            <path d="M10 5q2 3 0 6M12 3q3.500 5 0 10" stroke="#fff" strokeWidth="1.200" />
          </Icon>
        </span>
        <time className="flex-1 pl-1.5 text-center text-[10px]">15:40</time>
        <button type="button" aria-label="Show desktop" className="h-full w-3 border border-[#b9b3ba] bg-linear-to-br from-[#a59fa6] to-[#5b5560]" />
      </div>
    </div>
  );
}

export default function App() {
  return (
    <div className="min-h-screen bg-white">
      <div className="w-[71.125%] bg-[#f4f4f4] font-['Open_Sans','Noto_Sans',sans-serif] text-[10px] leading-[14px] text-[#1e1e1e]">
        <TitleBar />
        <MenuBar />
        <StandardBar />
        <PropertyBar />
        <div className="flex">
          <Toolbox />
          <div className="flex min-w-0 flex-1 flex-col">
            <DocumentTabs />
            <div className="flex border-b border-[#9a9a9a]">
              <span className="flex w-4 shrink-0 items-end justify-center">
                <Icon size={10}>
                  <path d="M3 0v16M0 5h12" stroke="#888" strokeDasharray="2 2" />
                  <path d="M6 7l8 8M14 10v5h-5" stroke="#333" strokeWidth="1.500" />
                </Icon>
              </span>
              <div className="relative flex min-w-0 flex-1">
                <HorizontalRuler />
                <span className="absolute top-px right-1 bg-[#f4f4f4] text-[8px] leading-[9px] text-[#8a8a8a]">millimeters</span>
              </div>
            </div>
            <div className="flex">
              <VerticalRuler />
              <div className="min-w-0 flex-1">
                <div className="flex h-[428px]">
                  <Canvas />
                  <VerticalScroll />
                </div>
                <Navigator />
              </div>
            </div>
            <DocumentPalette />
          </div>
          <ColorPalette />
        </div>
        <StatusBar />
        <Taskbar />
      </div>
    </div>
  );
}
